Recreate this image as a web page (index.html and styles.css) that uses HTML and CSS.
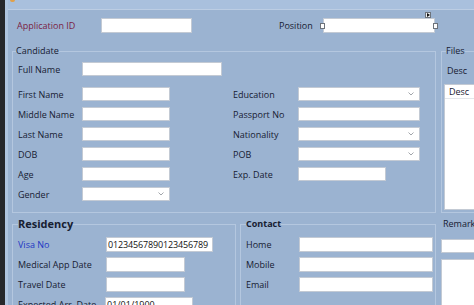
FILE: index.html
```html
<!doctype html>
<html lang="en">
<head>
    <meta charset="UTF-8">
    <link rel="stylesheet" href="styles.css">
    <title>Application Form</title>
</head>
<body>
<div class="window">
    <div class="edge"></div>
    <div class="strip"></div>
    <div class="main">
        <div class="titlebar"><span class="app-icon"></span></div>
        <div class="form">
            <div class="head-row">
                <label class="lbl lbl-app">Application ID</label>
                <input class="txt w-app" type="text">
                <label class="lbl lbl-pos">Position</label>
                <div class="selected">
                    <input class="txt w-pos" type="text">
                    <span class="handle left"></span>
                    <span class="handle right"></span>
                    <span class="smart-tag"></span>
                </div>
            </div>

            <div class="mid-row">
                <fieldset class="group candidate">
                    <legend>Candidate</legend>
                    <div class="full-row">
                        <label class="lbl">Full Name</label>
                        <input class="txt w-full" type="text">
                    </div>
                    <div class="cand-grid">
                        <label class="lbl">First Name</label>
                        <input class="txt" type="text">
                        <label class="lbl">Education</label>
                        <div class="combo"><svg viewBox="0 0 6 4"><path d="M0.5 0.5 3 3 5.5 0.5"/></svg></div>

                        <label class="lbl">Middle Name</label>
                        <input class="txt" type="text">
                        <label class="lbl">Passport No</label>
                        <input class="txt" type="text">

                        <label class="lbl">Last Name</label>
                        <input class="txt" type="text">
                        <label class="lbl">Nationality</label>
                        <div class="combo"><svg viewBox="0 0 6 4"><path d="M0.5 0.5 3 3 5.5 0.5"/></svg></div>

                        <label class="lbl">DOB</label>
                        <input class="txt" type="text">
                        <label class="lbl">POB</label>
                        <div class="combo"><svg viewBox="0 0 6 4"><path d="M0.5 0.5 3 3 5.5 0.5"/></svg></div>

                        <label class="lbl">Age</label>
                        <input class="txt" type="text">
                        <label class="lbl">Exp. Date</label>
                        <input class="txt w-exp" type="text">

                        <label class="lbl">Gender</label>
                        <div class="combo"><svg viewBox="0 0 6 4"><path d="M0.5 0.5 3 3 5.5 0.5"/></svg></div>
                    </div>
                </fieldset>

                <fieldset class="group files">
                    <legend>Files</legend>
                    <label class="lbl desc-lbl">Desc</label>
                    <div class="listview">
                        <div class="lv-head">Desc</div>
                    </div>
                </fieldset>
            </div>

            <div class="low-row">
                <fieldset class="group residency">
                    <legend class="big">Residency</legend>
                    <div class="res-grid">
                        <label class="lbl lbl-visa">Visa No</label>
                        <input class="txt w-visa" type="text" value="01234567890123456789">
                        <label class="lbl">Medical App Date</label>
                        <input class="txt w-date" type="text">
                        <label class="lbl">Travel Date</label>
                        <input class="txt w-date" type="text">
                        <label class="lbl">Expected Arr. Date</label>
                        <input class="txt w-arr" type="text" value="01/01/1900">
                    </div>
                </fieldset>

                <fieldset class="group contact">
                    <legend class="bold">Contact</legend>
                    <div class="con-grid">
                        <label class="lbl">Home</label>
                        <input class="txt" type="text">
                        <label class="lbl">Mobile</label>
                        <input class="txt" type="text">
                        <label class="lbl">Email</label>
                        <input class="txt" type="text">
                    </div>
                </fieldset>

                <div class="remarks">
                    <label class="lbl">Remarks:</label>
                    <input class="txt w-rem" type="text">
                    <div class="memo"></div>
                </div>
            </div>
        </div>
    </div>
</div>
</body>
</html>
```

FILE: styles.css
```css
body{
    margin: 0;
    width: 474px;
    height: 305px;
    overflow: hidden;
    background: #9bb3d1;
    font-family: "Open Sans", "Noto Sans", sans-serif;
    font-size: 9px;
    color: #172031;
}
.window{
    display: flex;
    height: 305px;
}
.edge{
    width: 5px;
    background: #27282b;
}
.strip{
    width: 3px;
    background: #b0c5df;
}
.main{
    flex: 1;
    min-width: 0;
    overflow: hidden;
}
.titlebar{
    height: 9px;
    background: #a9c0dd;
    border-bottom: 1px solid #bccde3;
    padding-left: 2px;
}
.app-icon{
    display: block;
    width: 5px;
    height: 2px;
    background: #e0a04a;
    border-radius: 0 0 2px 2px;
}
.form{
    padding: 8px 0 0 4px;
}

/* inputs */
.txt{
    box-sizing: border-box;
    display: block;
    width: 88px;
    height: 14px;
    margin: 0;
    padding: 0 1px;
    border: 1px solid #c3cad4;
    background: #fff;
    font-family: inherit;
    font-size: 9px;
    color: #111;
    outline: none;
}
.combo{
    box-sizing: border-box;
    width: 88px;
    height: 14px;
    border: 1px solid #c3cad4;
    background: #fff;
    display: flex;
    justify-content: flex-end;
    align-items: center;
    padding-right: 5px;
}
.combo svg{
    width: 6px;
    height: 4px;
    fill: none;
    stroke: #8a8f96;
    stroke-width: 0.8;
}
.lbl{
    white-space: nowrap;
}

/* top row */
.head-row{
    display: flex;
    align-items: center;
    height: 15px;
    padding-left: 5px;
}
.head-row .txt{
    height: 15px;
}
.lbl-app{
    width: 84px;
    color: #7a1d44;
}
.w-app{
    width: 91px !important;
}
.lbl-pos{
    margin-left: 87px;
    width: 44px;
}
.selected{
    position: relative;
}
.w-pos{
    width: 112px !important;
}
.handle{
    position: absolute;
    top: 5px;
    width: 3px;
    height: 4px;
    background: #fff;
    border: 1px solid #6d737b;
}
.handle.left{ left: -3px; }
.handle.right{ right: -3px; }
.smart-tag{
    position: absolute;
    top: -6px;
    right: 4px;
    width: 4px;
    height: 4px;
    border: 1px solid #6d737b;
    background: #eef0f3;
}
.smart-tag::after{
    content: "";
    position: absolute;
    left: 1px;
    top: 0;
    border-left: 3px solid #111;
    border-top: 2px solid transparent;
    border-bottom: 2px solid transparent;
}

/* group boxes */
.group{
    margin: 0;
    border: 1px solid #b4c7df;
    padding: 0 0 0 5px;
    min-width: 0;
    box-sizing: border-box;
}
.group legend{
    padding: 0;
    margin-left: -2px;
    line-height: 12px;
}
.group legend.big{
    font-size: 11px;
    font-weight: bold;
    line-height: 14px;
    margin-left: 0;
}
.group legend.bold{
    font-weight: bold;
    line-height: 14px;
    margin-left: 0;
}

.mid-row{
    display: flex;
    margin-top: 12px;
}
.candidate{
    flex: none;
    width: 424px;
    padding-top: 5px;
    padding-bottom: 11px;
}
.full-row{
    display: flex;
    align-items: center;
}
.full-row .lbl{
    width: 64px;
}
.w-full{
    width: 140px !important;
}
.cand-grid{
    margin-top: 11px;
    display: grid;
    grid-template-columns: 64px 88px 63px 65px 122px;
    grid-auto-rows: 14px;
    row-gap: 6px;
    align-items: center;
}
.cand-grid > :nth-child(4n+3){
    grid-column: 4;
}
.cand-grid > :nth-child(4n+4){
    width: 122px;
}
.cand-grid > .w-exp{
    width: 88px;
}
.files{
    flex: none;
    width: 60px;
    margin-left: 5px;
    padding: 8px 0 2px 2px;
}
.files legend{
    margin-left: 2px;
}
.desc-lbl{
    display: block;
    height: 12px;
    line-height: 12px;
    margin: 0 0 7px 3px;
}
.listview{
    height: 126px;
    box-sizing: border-box;
    background: #fff;
    border: 1px solid #c3cad4;
}
.lv-head{
    height: 13px;
    line-height: 14px;
    padding-left: 4px;
    border-bottom: 1px solid #e4e7eb;
}

/* bottom row */
.low-row{
    display: flex;
    margin-top: 4px;
}
.residency{
    flex: none;
    width: 224px;
    padding-top: 6px;
    padding-bottom: 20px;
}
.res-grid,
.con-grid{
    display: grid;
    grid-auto-rows: 15px;
    row-gap: 5px;
    align-items: center;
}
.res-grid{
    grid-template-columns: 88px auto;
}
.lbl-visa{
    color: #2236c4;
}
.res-grid .txt{
    height: 15px;
}
.w-visa{
    width: 107px !important;
    letter-spacing: -0.15px;
}
.w-date{
    width: 79px !important;
}
.w-arr{
    width: 88px !important;
    margin-left: -1px !important;
}
.contact{
    flex: none;
    margin-left: 4px;
    width: 196px;
    padding-top: 6px;
}
.con-grid{
    grid-template-columns: 53px 134px;
}
.con-grid .txt{
    width: 134px;
    height: 15px;
}
.remarks{
    flex: none;
    width: 60px;
    margin-left: 5px;
}
.remarks .lbl{
    display: block;
    margin-left: 2px;
    line-height: 14px;
}
.w-rem{
    width: 60px !important;
    margin-top: 8px !important;
}
.memo{
    margin-top: 6px;
    height: 60px;
    background: #fff;
    border: 1px solid #c3cad4;
    border-right: 0;
}
```
